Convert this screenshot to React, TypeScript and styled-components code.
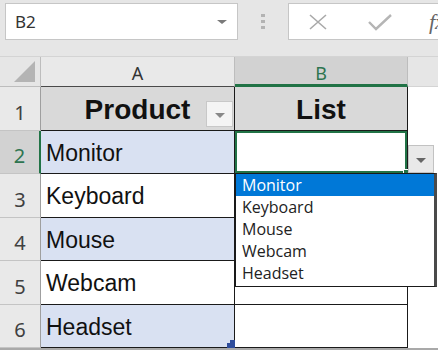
import styled, { createGlobalStyle } from "styled-components";

const GlobalStyle = createGlobalStyle`
  html, body { margin: 0; padding: 0; }
  body { background: #e6e6e6; overflow: hidden; }
  * { box-sizing: border-box; }
`;

const GREEN = "#217346";
const BLUE_FILL = "#d9e1f2";

type Row = { n: number; a: string; b?: string; head?: boolean; fill?: boolean };

const rows: Row[] = [
  { n: 1, a: "Product", b: "List", head: true },
  { n: 2, a: "Monitor", fill: true },
  { n: 3, a: "Keyboard" },
  { n: 4, a: "Mouse", fill: true },
  { n: 5, a: "Webcam" },
  { n: 6, a: "Headset", fill: true },
];

const options = ["Monitor", "Keyboard", "Mouse", "Webcam", "Headset"];

export default function App() {
  return (
    <Frame>
      <GlobalStyle />
      <Toolbar>
        <NameBox>
          <span>B2</span>
          <Caret />
        </NameBox>
        <Dots>
          <i />
          <i />
          <i />
        </Dots>
        <FormulaBox>
          <svg width="20" height="16" viewBox="0 0 20 16">
            <path d="M2 1 L18 15 M18 1 L2 15" stroke="#a9a9a9" strokeWidth="1.6" fill="none" />
          </svg>
          <svg width="26" height="18" viewBox="0 0 26 18">
            <path d="M2 9 L9 16 L24 2" stroke="#b5b5b5" strokeWidth="2.4" fill="none" />
          </svg>
          <Fx>fx</Fx>
        </FormulaBox>
      </Toolbar>

      <Sheet>
        <Corner>
          <svg width="21" height="21" viewBox="0 0 21 21">
            <polygon points="21,0 21,21 0,21" fill="#b4b4b4" />
          </svg>
        </Corner>
        <ColHeader>A</ColHeader>
        <ColHeader $active>B</ColHeader>
        <ColHeader $blank />

        {rows.map((r) => (
          <RowGroup key={r.n} row={r} />
        ))}
      </Sheet>
      <BottomEdge />
    </Frame>
  );
}

function RowGroup({ row }: { row: Row }) {
  const active = row.n === 2;
  return (
    <>
      <RowHeader $active={active}>{row.n}</RowHeader>
      <Cell $head={row.head} $fill={row.fill}>
        {row.a}
        {row.head && (
          <FilterButton>
            <SmallCaret />
          </FilterButton>
        )}
        {row.n === 6 && (
          <ResizeMark width="8" height="8" viewBox="0 0 8 8">
            <polygon points="3,0 8,0 8,8 0,8 0,3 3,3" fill="#2f4d9c" />
          </ResizeMark>
        )}
      </Cell>
      <Cell $head={row.head} $selected={active}>
        {row.b}
        {active && (
          <>
            <ListButton>
              <SmallCaret $dark />
            </ListButton>
            <DropList>
              {options.map((o, i) => (
                <DropItem key={o} $hot={i === 0}>
                  {o}
                </DropItem>
              ))}
            </DropList>
          </>
        )}
      </Cell>
      <Blank />
    </>
  );
}

const Frame = styled.div`
  width: 438px;
  height: 350px;
  overflow: hidden;
  background: #e6e6e6;
  display: flex;
  flex-direction: column;
`;

const Toolbar = styled.div`
  height: 57px;
  flex-shrink: 0;
  display: flex;
  align-items: flex-start;
  padding: 3px 0 0 5px;
  border-bottom: 1px solid #d4d4d4;
  & > * {
    flex-shrink: 0;
  }
`;

const NameBox = styled.div`
  width: 233px;
  height: 37px;
  background: #fff;
  border: 1px solid #c6c6c6;
  display: flex;
  align-items: center;
  justify-content: space-between;
  padding: 0 10px 0 9px;
  font-family: "Noto Sans", "Open Sans", sans-serif;
  font-size: 17px;
  color: #333;
`;

const Caret = styled.span`
  width: 0;
  height: 0;
  border-left: 5px solid transparent;
  border-right: 5px solid transparent;
  border-top: 4px solid #7a7a7a;
`;

const Dots = styled.div`
  width: 50px;
  height: 37px;
  display: flex;
  flex-direction: column;
  align-items: center;
  justify-content: center;
  gap: 3px;
  i {
    width: 4px;
    height: 3px;
    background: #b3b3b3;
  }
`;

const FormulaBox = styled.div`
  width: 170px;
  height: 37px;
  background: #fff;
  border: 1px solid #c6c6c6;
  display: flex;
  align-items: center;
  padding-left: 19px;
  gap: 38px;
  svg:nth-child(2) {
    margin-left: 1px;
  }
`;

const Fx = styled.span`
  font-family: "Liberation Serif", serif;
  font-style: italic;
  font-size: 22px;
  color: #666;
  margin-left: -2px;
`;

const Sheet = styled.div`
  display: grid;
  grid-template-columns: 41px 194px 173px 30px;
  grid-template-rows: 30px 44px 43px 44px 43px 44px 43px;
  background: #fff;
`;

const Corner = styled.div`
  background: #e6e6e6;
  border-right: 1px solid #bdbdbd;
  border-bottom: 1px solid #bdbdbd;
  display: flex;
  align-items: flex-end;
  justify-content: flex-end;
  padding: 0 5px 4px 0;
`;

const ColHeader = styled.div<{ $active?: boolean; $blank?: boolean }>`
  border-right: ${(p) => (p.$blank ? "none" : "1px solid #bdbdbd")};
  border-bottom: ${(p) =>
    p.$active ? `3px solid ${GREEN}` : p.$blank ? "1px solid #d4d4d4" : "1px solid #4a4a4a"};
  display: flex;
  align-items: center;
  justify-content: center;
  padding-top: ${(p) => (p.$active ? "5px" : "2px")};
  font-family: "Noto Sans", "Open Sans", sans-serif;
  font-size: 18px;
  color: ${(p) => (p.$active ? "#2e7550" : "#333")};
  background: ${(p) => (p.$blank ? "#e6e6e6" : p.$active ? "#d2d2d2" : "#e9e9e9")};
`;

const RowHeader = styled.div<{ $active?: boolean }>`
  background: ${(p) => (p.$active ? "#d2d2d2" : "#e9e9e9")};
  border-right: ${(p) => (p.$active ? `2px solid ${GREEN}` : "1px solid #9f9f9f")};
  border-bottom: 1px solid #c4c4c4;
  display: flex;
  align-items: flex-end;
  justify-content: center;
  padding-bottom: 4px;
  font-family: "Noto Sans", "Open Sans", sans-serif;
  font-size: 20px;
  color: ${(p) => (p.$active ? "#2e7550" : "#404040")};
`;

const Cell = styled.div<{ $head?: boolean; $fill?: boolean; $selected?: boolean }>`
  position: relative;
  display: flex;
  align-items: center;
  justify-content: ${(p) => (p.$head ? "center" : "flex-start")};
  padding-left: ${(p) => (p.$head ? "0" : "5px")};
  padding-top: 2px;
  background: ${(p) => (p.$head ? "#d9d9d9" : p.$fill ? BLUE_FILL : "#fff")};
  border-right: 1px solid #1a1a1a;
  border-bottom: 1px solid #1a1a1a;
  font-family: "Liberation Sans", Arial, sans-serif;
  font-size: ${(p) => (p.$head ? "28px" : "23px")};
  font-weight: ${(p) => (p.$head ? 700 : 400)};
  color: #111;
  ${(p) =>
    p.$selected &&
    `
    box-shadow: inset 0 0 0 2px ${GREEN};
    &::after {
      content: "";
      position: absolute;
      right: -4px;
      bottom: -4px;
      width: 6px;
      height: 6px;
      background: ${GREEN};
      border: 1px solid #fff;
      z-index: 3;
    }
  `}
`;

const Blank = styled.div`
  background: #fff;
`;

const FilterButton = styled.div`
  position: absolute;
  right: 1px;
  bottom: 3px;
  width: 27px;
  height: 26px;
  background: #f4f4f4;
  border: 1px solid #c8c8c8;
  display: flex;
  align-items: center;
  justify-content: center;
`;

const SmallCaret = styled.span<{ $dark?: boolean }>`
  width: 0;
  height: 0;
  margin-top: 2px;
  border-left: 5px solid transparent;
  border-right: 5px solid transparent;
  border-top: 5px solid ${(p) => (p.$dark ? "#666" : "#888")};
`;

const ListButton = styled.div`
  position: absolute;
  left: calc(100% + 1px);
  top: 14px;
  width: 26px;
  height: 28px;
  background: #e9e9e9;
  border: 1px solid #c2c2c2;
  display: flex;
  align-items: center;
  justify-content: center;
  z-index: 4;
`;

const DropList = styled.div`
  position: absolute;
  left: 0;
  top: 100%;
  width: 202px;
  height: 114px;
  background: #fff;
  border: 1px solid #1a1a1a;
  border-right: 3px solid #4a4a4a;
  z-index: 5;
  display: flex;
  flex-direction: column;
`;

const DropItem = styled.div<{ $hot?: boolean }>`
  height: 22px;
  display: flex;
  align-items: center;
  padding-left: 6px;
  font-family: "Open Sans", "Noto Sans", sans-serif;
  font-size: 16px;
  font-weight: 400;
  color: ${(p) => (p.$hot ? "#fff" : "#222")};
  background: ${(p) => (p.$hot ? "#0078d7" : "transparent")};
`;

const ResizeMark = styled.svg`
  position: absolute;
  right: -1px;
  bottom: -1px;
`;

const BottomEdge = styled.div`
  height: 3px;
  flex-shrink: 0;
  background: #a9a9a9;
`;
